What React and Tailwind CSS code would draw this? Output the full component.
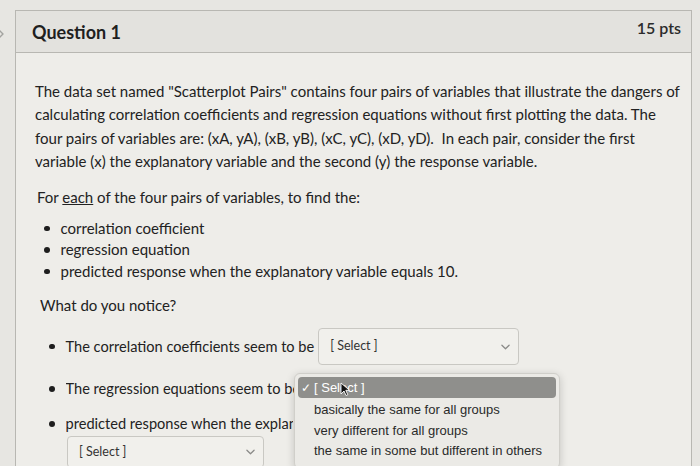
import React from "react";

const Chevron = ({ className }) => (
  <svg viewBox="0 0 10 6" className={className} fill="none">
    <path d="M1 1l4 4 4-4" stroke="#8a8a88" strokeWidth="1.4" strokeLinecap="round" strokeLinejoin="round" />
  </svg>
);

const SelectBox = ({ className }) => (
  <div
    className={`flex items-center justify-between border border-[#c9c8c3] rounded-[4px] bg-[#f1f0ec] pl-[11px] pr-[8px] text-[12.5px] text-[#333] ${className}`}
  >
    <span>[ Select ]</span>
    <Chevron className="w-[9px] h-[6px]" />
  </div>
);

const Bullet = ({ children, className = "" }) => (
  <li className={`flex items-center ${className}`}>
    <span className="w-[5.5px] h-[5.5px] rounded-full bg-[#1e1e1e] mr-[11px] shrink-0" />
    {children}
  </li>
);

const App = () => {
  return (
    <div
      className="relative w-[700px] h-[466px] overflow-hidden bg-[#e7e6e2] text-[#2d3b45]"
      style={{ fontFamily: "Lato, 'Open Sans', sans-serif" }}
    >
      {/* cropped nav arrow at the left edge */}
      <svg className="absolute left-[-4px] top-[28px] w-[9px] h-[12px]" viewBox="0 0 9 12" fill="none">
        <path d="M2 1l5 5-5 5" stroke="#a3a3a0" strokeWidth="1.4" strokeLinecap="round" strokeLinejoin="round" />
      </svg>

      <div className="ml-[15px] mt-[10px] w-[677px] h-[480px] border border-[#b8b7b2] bg-[#eeede9]">
        <div className="h-[42px] flex items-center justify-between pl-[16px] pr-[10px] bg-[#e3e2de] border-b border-[#b8b7b2]">
          <h2 className="text-[18px] font-bold text-[#1f1f1f] pt-[2px]">Question 1</h2>
          <span className="text-[16px] font-semibold text-[#2b2b2b] -mt-[8px]">15 pts</span>
        </div>

        <div className="pt-[27px] pl-[19px] text-[15px] text-[#222]">
          <p className="leading-[23.4px] whitespace-nowrap">
            The data set named "Scatterplot Pairs" contains four pairs of variables that illustrate the dangers of
            <br />
            calculating correlation coefficients and regression equations without first plotting the data. The
            <br />
            four pairs of variables are: (xA, yA), (xB, yB), (xC, yC), (xD, yD).&nbsp; In each pair, consider the first
            <br />
            variable (x) the explanatory variable and the second (y) the response variable.
          </p>

          <p className="mt-[12px] pl-[2px] leading-[23px]">
            For <span className="underline">each</span> of the four pairs of variables, to find the:
          </p>

          <ul className="mt-[9px] pl-[9px] leading-[21.5px]">
            <Bullet>correlation coefficient</Bullet>
            <Bullet>regression equation</Bullet>
            <Bullet>predicted response when the explanatory variable equals 10.</Bullet>
          </ul>

          <p className="mt-[12px] pl-[5px] leading-[23px]">What do you notice?</p>

          <ul className="mt-[11px] pl-[14px] text-[14.6px]">
            <Bullet>
              <span className="mr-[4px]">The correlation coefficients seem to be</span>
              <SelectBox className="w-[201px] h-[37px]" />
            </Bullet>
            <Bullet className="mt-[13px]">
              <span className="w-[229px] overflow-hidden whitespace-nowrap">The regression equations seem to be</span>
            </Bullet>
            <Bullet className="mt-[13px]">
              <span className="w-[227px] overflow-hidden whitespace-nowrap">predicted response when the explanatory variable equals 10 is</span>
            </Bullet>
            <li className="mt-[1px] pl-[18px]">
              <SelectBox className="w-[197px] h-[32px]" />
            </li>
          </ul>
        </div>
      </div>

      {/* open dropdown menu */}
      <div
        className="absolute left-[294px] top-[373px] w-[266px] h-[96px] rounded-[6px] border border-[#d0cfca] bg-[#ebeae6] shadow-[0_2px_8px_rgba(0,0,0,0.18)] px-[3px] pt-[3px] text-[13px] text-[#2a2a2a]"
        style={{ fontFamily: "'Liberation Sans', Arial, sans-serif" }}
      >
        <div className="h-[21px] rounded-[4px] bg-[#8f8f8c] text-white flex items-center">
          <span className="w-[16px] text-center text-[12px]">✓</span>
          <span>[ Select ]</span>
        </div>
        <div className="pl-[16px] leading-[20.5px] mt-[2px]">
          <div>basically the same for all groups</div>
          <div>very different for all groups</div>
          <div>the same in some but different in others</div>
        </div>
      </div>

      {/* mouse cursor */}
      <svg className="absolute left-[340px] top-[382px] w-[10px] h-[15px]" viewBox="0 0 10 15">
        <path d="M1 1v11l3-3 2 4.5 1.8-.8-2-4.4H9.5z" fill="#111" stroke="#fff" strokeWidth="0.9" />
      </svg>
    </div>
  );
};

export default App;
